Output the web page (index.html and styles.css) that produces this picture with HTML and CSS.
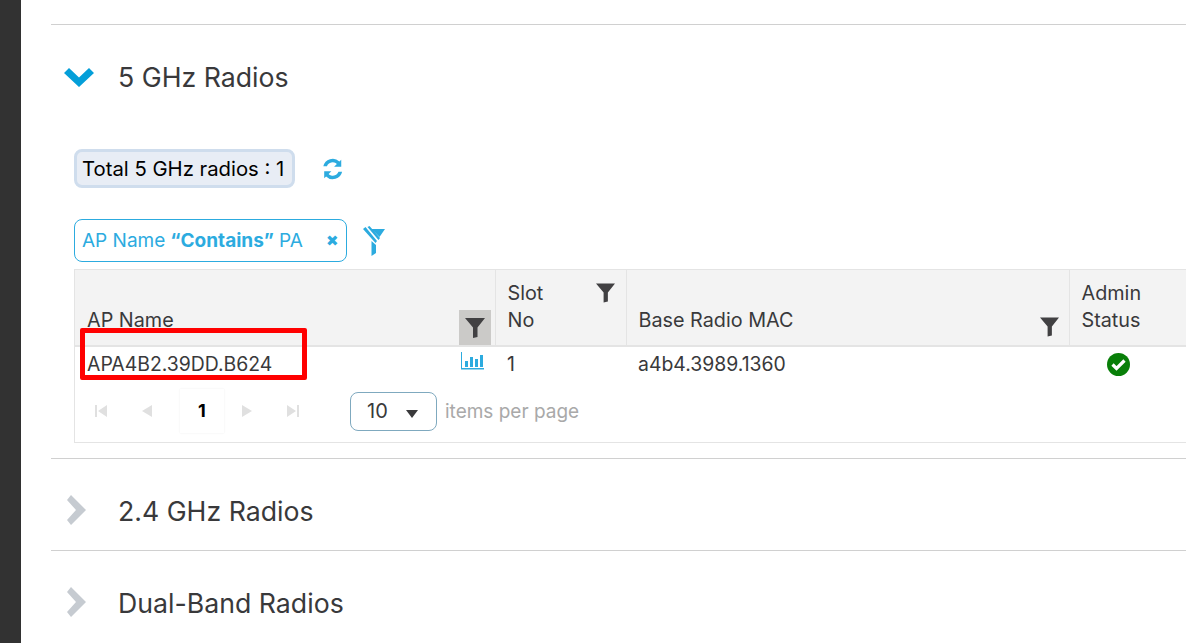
FILE: index.html
```html
<!DOCTYPE html>
<html lang="en">
<head>
	<title>Radios</title>
	<meta charset="UTF-8">
	<link rel="stylesheet" href="styles.css">
</head>
<body>
	<div class="rail"></div>
	<div class="main">
		<section class="band band-open">
			<h2 class="band-head">
				<svg class="chev-open" width="30" height="20" viewBox="0 0 30 20"><path d="M0 6 5 1 15 10.500 25 1 30 6 15 20z"/></svg>
				<span>5 GHz Radios</span>
			</h2>
			<div class="total-row">
				<span class="total">Total 5 GHz radios : 1</span>
				<svg class="refresh" width="22" height="22" viewBox="0 0 22 22"><path d="M18.500 2.500V9h-6.500l2.500-2.500A5.500 5.500 0 0 0 5.500 8.500H2.200A8.700 8.700 0 0 1 16.800 4.200zM3 19.500V13h6.500L7 15.500a5.500 5.500 0 0 0 9-2h3.300A8.700 8.700 0 0 1 4.700 17.800z"/></svg>
			</div>
			<div class="filter-row">
				<span class="chip">AP Name <b>“Contains”</b> PA<span class="chip-x">&#10006;</span></span>
				<svg class="multi-filter" width="22" height="30" viewBox="0 0 22 30"><path d="M0 3 2.500 1 14 15 12.500 17zM4.500 1 6.500 0 17 12 15.500 14zM9 3H22L16.500 11zM8.500 15 13 19V27L8.500 30z"/></svg>
			</div>
			<div class="grid-box">
				<table class="grid">
					<colgroup>
						<col class="col-name"><col class="col-slot"><col class="col-mac"><col class="col-admin">
					</colgroup>
					<thead>
						<tr>
							<th>
								<div class="th-in">
									<span>AP Name</span>
									<span class="funnel-btn"><svg class="funnel" width="20" height="20" viewBox="0 0 20 20"><path d="M0 0H20L12.500 9.500V19L8 20V9.500z"/></svg></span>
								</div>
							</th>
							<th>
								<div class="th-in th-top">
									<span>Slot<br>No</span>
									<svg class="funnel funnel-slot" width="19" height="20" viewBox="0 0 20 20"><path d="M0 0H20L12.500 9.500V19L8 20V9.500z"/></svg>
								</div>
							</th>
							<th>
								<div class="th-in">
									<span>Base Radio MAC</span>
									<svg class="funnel funnel-mac" width="19" height="20" viewBox="0 0 20 20"><path d="M0 0H20L12.500 9.500V19L8 20V9.500z"/></svg>
								</div>
							</th>
							<th>Admin<br>Status</th>
						</tr>
					</thead>
					<tbody>
						<tr>
							<td>
								<div class="td-in">
									<span>APA4B2.39DD.B624</span>
									<svg class="bars" width="23" height="18" viewBox="0 0 23 18"><path d="M0 0H1V16H23V17.500H0z"/><path d="M4 9H7V15H4zM9 5H12V15H9zM14 7H17V15H14zM19 3H22V15H19z"/></svg>
								</div>
							</td>
							<td>1</td>
							<td>a4b4.3989.1360</td>
							<td class="cell-ok">
								<svg width="23" height="23" viewBox="0 0 23 23"><circle cx="11.500" cy="11.500" r="11.500" fill="#087f08"/><path d="M5.500 11.500 9.500 15.500 17.500 7.500" fill="none" stroke="#fff" stroke-width="3.200"/></svg>
							</td>
						</tr>
					</tbody>
				</table>
				<div class="pager">
					<svg class="pg-ico" width="12" height="12" viewBox="0 0 12 12"><path d="M0 0H2V12H0zM12 0V12L3 6z"/></svg>
					<svg class="pg-ico" width="10" height="12" viewBox="0 0 10 12"><path d="M10 0V12L0 6z"/></svg>
					<span class="pg-cur">1</span>
					<svg class="pg-ico" width="10" height="12" viewBox="0 0 10 12"><path d="M0 0V12L10 6z"/></svg>
					<svg class="pg-ico pg-last" width="12" height="12" viewBox="0 0 12 12"><path d="M0 0V12L9 6zM10 0H12V12H10z"/></svg>
					<span class="pg-size">10<i class="caret"></i></span>
					<span class="pg-label">items per page</span>
				</div>
			</div>
		</section>
		<section class="band">
			<h2 class="band-head">
				<svg class="chev-closed" width="20" height="30" viewBox="0 0 20 30"><path d="M1 5 5 0 20 15 5 30 1 25 10 15z"/></svg>
				<span>2.4 GHz Radios</span>
			</h2>
		</section>
		<section class="band">
			<h2 class="band-head">
				<svg class="chev-closed" width="20" height="30" viewBox="0 0 20 30"><path d="M1 5 5 0 20 15 5 30 1 25 10 15z"/></svg>
				<span>Dual-Band Radios</span>
			</h2>
		</section>
		<div class="mark"></div>
	</div>
</body>
</html>
```

FILE: styles.css
```css
html, body{
	height: 100%;
}
body{
	margin: 0;
	display: flex;
	overflow: hidden;
	background-color: #fff;
	color: #39393b;
	font-family: "Inter", "Liberation Sans", sans-serif;
	font-size: 18px;
}
.rail{
	flex: 0 0 21px;
	background-color: #323232;
}
.main{
	flex: 1;
	min-width: 0;
	padding: 24px 0 0 30px;
}
.band{
	border-top: 1px solid #d0d0d0;
	height: 91px;
}
.band-open{
	height: 433px;
}
.band-head{
	margin: 0;
	display: flex;
	align-items: center;
	height: 103px;
	padding-left: 13px;
	font-size: 26.700px;
	font-weight: 400;
	color: #39393b;
}
.band-head span{
	margin-left: 24px;
}
.chev-open{
	fill: #049fd9;
}
.chev-closed{
	fill: #c6cbd1;
	margin: -2px 8px 0 2px;
}
.total-row{
	display: flex;
	align-items: center;
	margin: 21px 0 0 23px;
}
.total{
	box-sizing: border-box;
	height: 39px;
	width: 221px;
	line-height: 33px;
	border: 3px solid #cfdded;
	border-radius: 8px;
	background-color: #e8edf5;
	padding-left: 5px;
	color: #000;
	font-size: 20.300px;
	white-space: nowrap;
}
.refresh{
	fill: #2cabdf;
	margin-left: 27px;
	transform: scale(1.1);
}
.filter-row{
	display: flex;
	align-items: center;
	margin: 31px 0 7px 23px;
}
.chip{
	box-sizing: border-box;
	display: flex;
	align-items: center;
	gap: 5px;
	height: 43px;
	width: 273px;
	padding: 0 7px;
	border: 1px solid #2cabdf;
	border-radius: 8px;
	color: #2cabdf;
	font-size: 19px;
	white-space: nowrap;
}
.chip-x{
	margin-left: auto;
	font-size: 15px;
}
.multi-filter{
	fill: #2cabdf;
	margin-left: 16px;
}
.grid-box{
	margin-left: 23px;
	border: 1px solid #e4e4e4;
	border-right: 0;
	height: 172px;
	overflow: hidden;
}
.grid{
	border-collapse: collapse;
	table-layout: fixed;
	width: 1112px;
}
.col-name{
	width: 420px;
}
.col-slot{
	width: 131px;
}
.col-mac{
	width: 443px;
}
.grid th{
	height: 76px;
	padding: 0 4px 11px 12px;
	box-sizing: border-box;
	background-color: #f3f3f3;
	border-right: 1px solid #e4e4e4;
	border-bottom: 2px solid #e4e4e4;
	vertical-align: bottom;
	text-align: left;
	font-size: 19.800px;
	font-weight: 400;
	line-height: 27px;
}
.grid td{
	height: 34px;
	padding: 0 12px;
	vertical-align: middle;
	font-size: 19.400px;
}
.th-in, .td-in{
	display: flex;
	justify-content: space-between;
}
.th-in{
	align-items: flex-end;
}
.th-top{
	align-items: flex-start;
}
.funnel{
	fill: #414042;
}
.funnel-slot{
	margin: 3px 7px 0 0;
}
.funnel-btn{
	display: flex;
	align-items: center;
	justify-content: center;
	width: 32px;
	height: 35px;
	margin-bottom: -11px;
	background-color: #cbcac8;
}
.funnel-mac{
	margin: 0 6px -3px 0;
}
.bars{
	fill: #2cabdf;
	margin-right: -1px;
}
.cell-ok svg{
	display: block;
	margin-left: 26px;
}
.pager{
	display: flex;
	align-items: center;
	height: 44px;
	margin-top: 8px;
	padding-left: 20px;
}
.pg-ico{
	fill: #e0e0e0;
	margin-right: 35px;
}
.pg-cur{
	width: 44px;
	height: 44px;
	margin: 0 18px 0 -7px;
	line-height: 44px;
	text-align: center;
	color: #000;
	font-weight: 700;
	box-shadow: 0 0 2px #eee;
}
.pg-last{
	margin-right: 51px;
}
.pg-size{
	box-sizing: border-box;
	display: flex;
	align-items: center;
	width: 87px;
	height: 39px;
	padding-left: 16px;
	border: 1px solid #7fa9bf;
	border-radius: 8px;
	font-size: 20px;
}
.caret{
	margin: 6px 0 0 18px;
	border-left: 6px solid transparent;
	border-right: 6px solid transparent;
	border-top: 8px solid #39393b;
}
.pg-label{
	margin-left: 8px;
	color: #a9a9a9;
	font-size: 19px;
}
.mark{
	position: absolute;
	left: 80px;
	top: 328px;
	box-sizing: border-box;
	width: 227px;
	height: 52px;
	border: 5px solid #f00;
	border-radius: 2px;
}
```
